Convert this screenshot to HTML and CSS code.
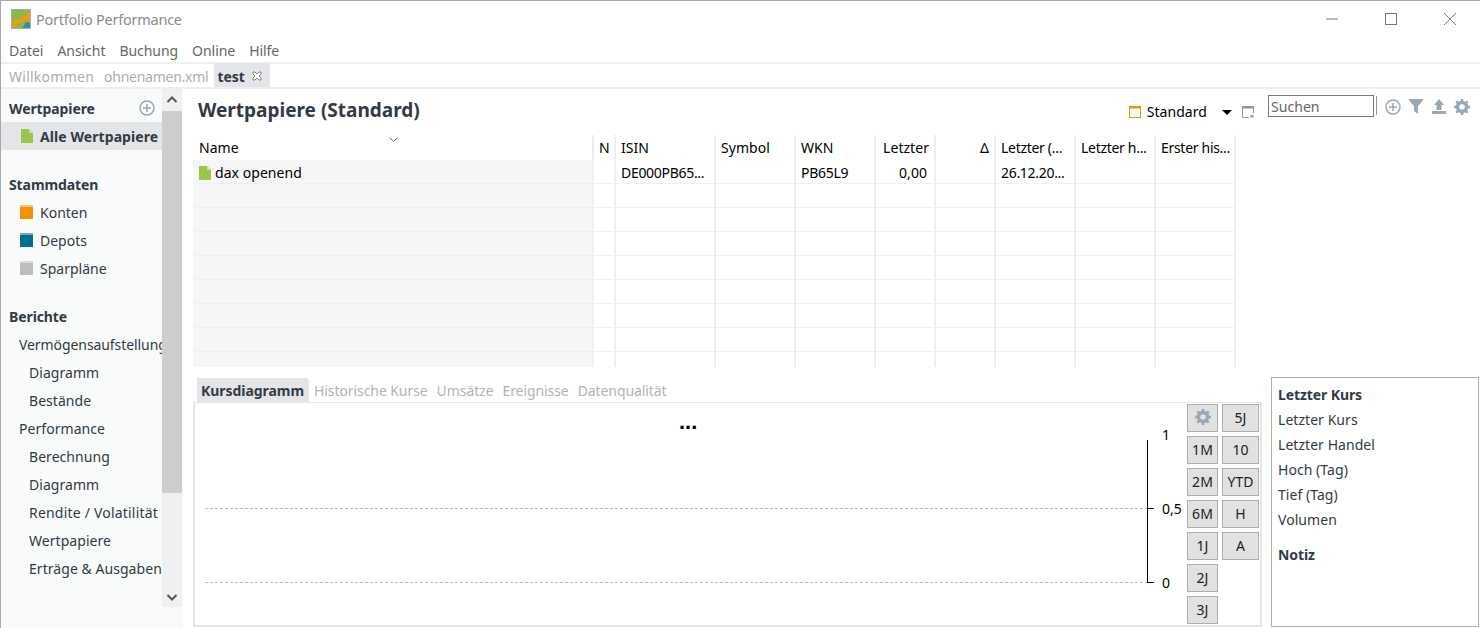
FILE: index.html
```html
<!DOCTYPE html>
<html lang="de">
<head>
<meta charset="utf-8">
<title>Portfolio Performance</title>
<link rel="stylesheet" href="styles.css">
</head>
<body>
<div class="window">
  <header class="titlebar">
    <div class="app-title">
      <svg class="logo" width="20" height="20" viewBox="0 0 20 20"><rect x="0.5" y="0.5" width="19" height="19" fill="#8fb84a" stroke="#a9b0a8"/><path d="M1 18V14L6 10L9 11L13 6L15 7L19 2V12L15 11L11 14L7 14L4 18Z" fill="#f39a12"/><path d="M12 18L14 14L17 13L19 14V19H12Z" fill="#3c8aa8"/></svg>
      <span>Portfolio Performance</span>
    </div>
    <div class="win-controls">
      <svg width="14" height="14" viewBox="0 0 14 14"><path d="M1 7H13" stroke="#777" fill="none"/></svg>
      <svg width="14" height="14" viewBox="0 0 14 14"><rect x="1.5" y="1.5" width="11" height="11" stroke="#777" fill="none"/></svg>
      <svg width="14" height="14" viewBox="0 0 14 14"><path d="M1 1L13 13M13 1L1 13" stroke="#777" fill="none"/></svg>
    </div>
  </header>
  <nav class="menubar"><span>Datei</span><span>Ansicht</span><span>Buchung</span><span>Online</span><span>Hilfe</span></nav>
  <div class="tabbar">
    <span class="doc-tab welcome">Willkommen</span>
    <span class="doc-tab file">ohnenamen.xml</span>
    <span class="doc-tab active">test
      <svg width="10" height="10" viewBox="0 0 10 10"><path d="M1 1H3L5 3L7 1H9V3L7 5L9 7V9H7L5 7L3 9H1V7L3 5L1 3Z" fill="#fff" stroke="#777" stroke-width="0.9"/></svg>
    </span>
  </div>
  <div class="body">
    <aside class="sidebar">
      <div class="side-list">
        <div class="side-head first"><span>Wertpapiere</span>
          <svg class="add" width="16" height="16" viewBox="0 0 16 16"><circle cx="8" cy="8" r="7" fill="none" stroke="#9aa7b4" stroke-width="1.5"/><path d="M8 4V12M4 8H12" stroke="#9aa7b4" stroke-width="1.6"/></svg>
        </div>
        <div class="side-item selected">
          <svg class="doc" width="12" height="14" viewBox="0 0 12 14"><path d="M0 0H8L12 4V14H0Z" fill="#9dc44d"/><path d="M8 0L12 4H8Z" fill="#cfe2a3"/></svg>
          <span>Alle Wertpapiere</span>
        </div>
        <div class="side-head gap">Stammdaten</div>
        <div class="side-item"><i class="swatch orange"></i><span class="normal">Konten</span></div>
        <div class="side-item"><i class="swatch teal"></i><span class="normal">Depots</span></div>
        <div class="side-item"><i class="swatch gray"></i><span class="normal">Sparpläne</span></div>
        <div class="side-head gap">Berichte</div>
        <div class="side-sub l1 tight">Vermögensaufstellung</div>
        <div class="side-sub l2">Diagramm</div>
        <div class="side-sub l2">Bestände</div>
        <div class="side-sub l1">Performance</div>
        <div class="side-sub l2">Berechnung</div>
        <div class="side-sub l2">Diagramm</div>
        <div class="side-sub l2 wide-text">Rendite / Volatilität</div>
        <div class="side-sub l2">Wertpapiere</div>
        <div class="side-sub l2">Erträge &amp; Ausgaben</div>
      </div>
      <div class="scrollbar">
        <svg width="20" height="22" viewBox="0 0 20 22"><path d="M5.5 13L10 8.5L14.500 13" fill="none" stroke="#555" stroke-width="2"/></svg>
        <div class="thumb"></div>
        <div class="track"></div>
        <svg width="20" height="20" viewBox="0 0 20 20"><path d="M5.500 8L10 12.500L14.500 8" fill="none" stroke="#555" stroke-width="2"/></svg>
      </div>
    </aside>
    <main class="content">
      <div class="head">
        <h1>Wertpapiere (Standard)</h1>
        <div class="tools">
          <svg width="12" height="12" viewBox="0 0 12 12"><rect x="0.500" y="0.500" width="11" height="11" fill="#fff" stroke="#f39200"/><rect width="12" height="2.500" fill="#f39200"/></svg>
          <span class="std">Standard</span>
          <svg class="caret" width="10" height="5" viewBox="0 0 10 5"><path d="M0 0H10L5 5Z" fill="#000"/></svg>
          <svg class="newview" width="12" height="12" viewBox="0 0 12 12"><path d="M0.500 11.500V0.500H11.500V7M0.500 11.500H7" fill="none" stroke="#8c9aa8"/><rect width="12" height="2.500" fill="#8c9aa8"/><rect x="8.500" y="9" width="3" height="2.500" fill="#8c9aa8"/></svg>
          <div class="search">Suchen</div>
          <i class="tool-sep"></i>
          <svg width="16" height="16" viewBox="0 0 16 16"><circle cx="8" cy="8" r="7" fill="none" stroke="#9aa7b4" stroke-width="1.500"/><path d="M8 4V12M4 8H12" stroke="#9aa7b4" stroke-width="1.600"/></svg>
          <svg class="filter" width="14" height="15" viewBox="0 0 14 15"><path d="M0 0H14V1.500L9 7V15L5 12V7L0 1.500Z" fill="#9aa7b4"/></svg>
          <svg width="14" height="15" viewBox="0 0 14 15"><path d="M7 0L12 6H9.500V11H4.500V6H2Z" fill="#9aa7b4"/><path d="M0 12H14V15H0Z" fill="#9aa7b4"/></svg>
          <svg width="16" height="16" viewBox="0 0 16 16"><circle cx="8" cy="8" r="4.500" fill="none" stroke="#9aa7b4" stroke-width="3.400"/><path d="M8 0V3M8 13V16M0 8H3M13 8H16M2.300 2.300L4.500 4.500M11.500 11.500L13.700 13.700M13.700 2.300L11.500 4.500M4.500 11.500L2.300 13.700" stroke="#9aa7b4" stroke-width="2.600"/></svg>
        </div>
      </div>
      <div class="sort-mark"><svg width="9" height="5" viewBox="0 0 9 5"><path d="M0.500 0.500L4.500 4.500L8.500 0.500" fill="none" stroke="#777"/></svg></div>
      <table class="grid">
        <colgroup><col class="c-name"><col class="c-n"><col class="c-isin"><col class="c-80"><col class="c-80"><col class="c-60"><col class="c-60"><col class="c-80"><col class="c-80"><col class="c-80"><col></colgroup>
        <thead>
          <tr><th class="name">Name</th><th>N</th><th>ISIN</th><th>Symbol</th><th>WKN</th><th class="right">Letzter</th><th class="right">Δ</th><th class="cut">Letzter (...</th><th class="cut">Letzter h...</th><th class="cut">Erster his...</th><th class="blank"></th></tr>
        </thead>
        <tbody>
          <tr><td class="name"><svg class="doc" width="12" height="14" viewBox="0 0 12 14"><path d="M0 0H8L12 4V14H0Z" fill="#9dc44d"/><path d="M8 0L12 4H8Z" fill="#cfe2a3"/></svg>dax openend</td><td></td><td class="cut">DE000PB65...</td><td></td><td class="cut">PB65L9</td><td class="right">0,00</td><td></td><td class="cut">26.12.20...</td><td></td><td></td><td class="blank"></td></tr>
          <tr><td class="name"></td><td></td><td></td><td></td><td></td><td></td><td></td><td></td><td></td><td></td><td class="blank"></td></tr>
          <tr><td class="name"></td><td></td><td></td><td></td><td></td><td></td><td></td><td></td><td></td><td></td><td class="blank"></td></tr>
          <tr><td class="name"></td><td></td><td></td><td></td><td></td><td></td><td></td><td></td><td></td><td></td><td class="blank"></td></tr>
          <tr><td class="name"></td><td></td><td></td><td></td><td></td><td></td><td></td><td></td><td></td><td></td><td class="blank"></td></tr>
          <tr><td class="name"></td><td></td><td></td><td></td><td></td><td></td><td></td><td></td><td></td><td></td><td class="blank"></td></tr>
          <tr><td class="name"></td><td></td><td></td><td></td><td></td><td></td><td></td><td></td><td></td><td></td><td class="blank"></td></tr>
          <tr><td class="name"></td><td></td><td></td><td></td><td></td><td></td><td></td><td></td><td></td><td></td><td class="blank"></td></tr>
          <tr class="partial"><td class="name"></td><td></td><td></td><td></td><td></td><td></td><td></td><td></td><td></td><td></td><td class="blank"></td></tr>
        </tbody>
      </table>
      <div class="lower">
        <section class="detail">
          <div class="detail-tabs"><span class="active">Kursdiagramm</span><span>Historische Kurse</span><span>Umsätze</span><span>Ereignisse</span><span>Datenqualität</span></div>
          <div class="panel">
            <div class="chart">
              <div class="dots">...</div>
              <i class="dash d1"></i><i class="dash d2"></i>
              <i class="axis"></i><i class="tick t2"></i><i class="tick t3"></i>
              <span class="lab l-1">1</span><span class="lab l-5">0,5</span><span class="lab l-0">0</span>
            </div>
            <div class="ranges">
              <button class="range"><svg width="16" height="16" viewBox="0 0 16 16"><circle cx="8" cy="8" r="4.500" fill="none" stroke="#9aa7b4" stroke-width="3.400"/><path d="M8 0V3M8 13V16M0 8H3M13 8H16M2.300 2.300L4.500 4.500M11.500 11.500L13.700 13.700M13.700 2.300L11.500 4.500M4.500 11.500L2.300 13.700" stroke="#9aa7b4" stroke-width="2.600"/></svg></button>
              <button class="range wide">5J</button>
              <button class="range">1M</button><button class="range wide">10</button>
              <button class="range">2M</button><button class="range wide">YTD</button>
              <button class="range">6M</button><button class="range wide">H</button>
              <button class="range">1J</button><button class="range wide">A</button>
              <button class="range">2J</button><span></span>
              <button class="range">3J</button><span></span>
            </div>
          </div>
        </section>
        <section class="info">
          <h2>Letzter Kurs</h2>
          <p>Letzter Kurs</p>
          <p>Letzter Handel</p>
          <p>Hoch (Tag)</p>
          <p>Tief (Tag)</p>
          <p>Volumen</p>
          <h2 class="note">Notiz</h2>
        </section>
      </div>
    </main>
  </div>
</div>
</body>
</html>
```

FILE: styles.css
```css
* { box-sizing: border-box; }
html, body { margin: 0; height: 100%; overflow: hidden; background: #fff; }
body { font-family: "Noto Sans", "Open Sans", sans-serif; font-size: 14px; letter-spacing: 0.05px; color: #000; }
svg { display: block; flex: none; }

.window { height: 628px; border-top: 1px solid #a8a8a8; border-left: 1px solid #a8a8a8; display: flex; flex-direction: column; }

.titlebar { height: 37px; flex: none; display: flex; align-items: center; justify-content: space-between; padding: 0 0 2px 10px; }
.app-title { display: flex; align-items: center; gap: 5px; color: #8c8c8c; font-size: 14.500px; letter-spacing: -0.25px; }
.win-controls { display: flex; gap: 45px; padding-right: 23px; }

.menubar { height: 24px; flex: none; display: flex; gap: 14px; padding-left: 8px; align-items: center; color: #666; letter-spacing: -0.05px; }

.tabbar { height: 27px; flex: none; display: flex; align-items: flex-end; padding-left: 3px; border-top: 2px solid #f0f0f0; border-bottom: 2px solid #eeeeee; }
.doc-tab { height: 24px; display: flex; align-items: center; gap: 7px; padding: 2px 5px 0; color: #a9adb3; }
.doc-tab.welcome { letter-spacing: 0.25px; }
.doc-tab.file { letter-spacing: -0.25px; }
.doc-tab.active { background: #e3e5e9; color: #333a45; font-weight: 700; letter-spacing: -0.1px; border-radius: 0 4px 0 0; margin-left: 1px; padding: 2px 8px 0 3px; }

.body { flex: 1; display: flex; min-height: 0; }

.sidebar { width: 182px; flex: none; display: flex; background: #f8fbf9; }
.side-list { width: 161px; flex: none; overflow: hidden; white-space: nowrap; color: #333a45; }
.side-head { height: 28px; display: flex; align-items: center; justify-content: space-between; padding: 0 7px 0 8px; font-weight: 700; letter-spacing: -0.1px; }
.side-head.first { margin-top: 5px; }
.side-head.gap { margin-top: 20px; }
.side-item { height: 28px; display: flex; align-items: center; gap: 7px; padding-left: 19px; font-weight: 700; letter-spacing: 0.08px; }
.side-item .doc { margin-left: 1px; }
.side-item.selected { background: #e3e5e9; }
.side-item .normal { font-weight: 400; letter-spacing: 0; }
.swatch { width: 13px; height: 14px; display: block; flex: none; border-top: 2px solid rgba(255,255,255,.45); }
.swatch.orange { background: #f39200; }
.swatch.teal { background: #006f8f; }
.swatch.gray { background: #bdbdbd; }
.side-sub { height: 28px; display: flex; align-items: center; }
.side-sub.l1 { padding-left: 18px; }
.side-sub.l2 { padding-left: 28px; }
.side-sub.tight { letter-spacing: -0.08px; }
.side-sub.wide-text { letter-spacing: 0.2px; }

.scrollbar { width: 20px; flex: none; background: #f0f0f0; display: flex; flex-direction: column; height: 518px; }
.thumb { height: 382px; flex: none; background: #cdcdcd; }
.track { flex: 1; }

.content { flex: 1; min-width: 0; padding-left: 10px; display: flex; flex-direction: column; }

.head { height: 46px; flex: none; display: flex; justify-content: space-between; padding: 0 0 0 5px; }
h1 { margin: 8px 0 0; font-size: 19px; font-weight: 700; color: #333a45; line-height: 26px; letter-spacing: 0; }
.tools { display: flex; align-items: flex-start; padding: 10px 10px 0 0; gap: 8px; }
.tools > svg:first-child { margin-top: 7px; }
.std { margin-left: -2px; line-height: 26px; }
.tools .caret { margin: 11px 2px 0 7px; }
.tools .newview { margin: 7px 10px 0 0; }
.tools .filter { margin-right: 1px; }
.search { width: 106px; height: 22px; margin-top: -4px; margin-left: -4px; border: 1px solid #7a7a7a; color: #666; line-height: 21px; padding-left: 2px; }
.tool-sep { width: 1px; height: 19px; margin: -3px 0 0 -6px; background: #999; display: block; }

.sort-mark { height: 0; padding-left: 196px; position: relative; top: 2px; }

.grid { table-layout: fixed; width: 100%; border-collapse: separate; border-spacing: 0; flex: none; height: 232px; }
.c-name { width: 401px; } .c-n { width: 22px; } .c-isin { width: 100px; } .c-80 { width: 80px; } .c-60 { width: 60px; }
.grid th { height: 25px; font-weight: 400; text-align: left; padding: 0 5px 0 5px; border-right: 2px solid #eeeeee; white-space: nowrap; overflow: hidden; }
.grid th.name { padding-left: 6px; }
.grid th.blank, .grid td.blank { border: 0; background: none; }
.grid th.right, .grid td.right { text-align: right; }
.grid td { height: 24px; padding: 1px 5px 0; border-right: 2px solid #e9f0f8; border-bottom: 1px solid #eef0f4; white-space: nowrap; overflow: hidden; }
.grid td.blank { border: 0; }
.grid td.right { padding-right: 7px; }
.grid td.name { background: #f6f6f6; border-right: 2px solid #eef2f8; padding-left: 6px; }
.grid td.name .doc { display: inline-block; vertical-align: -2px; margin-right: 4px; }
.grid .partial td { height: 15px; border-bottom: 0; }
.grid .cut { letter-spacing: -0.3px; }

.lower { flex: 1; display: flex; min-height: 0; margin-top: 11px; gap: 9px; padding-bottom: 1px; }
.detail { width: 1069px; flex: none; display: flex; flex-direction: column; }
.detail-tabs { height: 24px; flex: none; display: flex; align-items: flex-start; color: #b0b3b8; padding-left: 4px; letter-spacing: -0.08px; }
.detail-tabs span { padding: 0 5px 0 4px; height: 24px; line-height: 25px; }
.detail-tabs span.active { background: #e3e5e9; color: #333a45; font-weight: 700; letter-spacing: -0.05px; border-radius: 0 4px 0 0; margin-right: 1px; }
.panel { flex: 1; display: flex; border: 2px solid #e6e6ea; border-top-width: 1px; position: relative; min-height: 0; }
.chart { flex: 1; position: relative; }
.dots { position: absolute; left: 484px; top: 7px; font-family: "Liberation Sans", sans-serif; font-weight: 700; font-size: 22px; line-height: 24px; letter-spacing: 0; }
.dash { position: absolute; left: 10px; width: 943px; border-top: 1px dashed #bbb; display: block; }
.dash.d1 { top: 105px; }
.dash.d2 { top: 179px; }
.axis { position: absolute; left: 952px; top: 37px; height: 143px; width: 1px; background: #000; display: block; }
.tick { position: absolute; left: 952px; width: 7px; height: 1px; background: #000; display: block; }
.tick.t2 { top: 105px; } .tick.t3 { top: 179px; }
.lab { position: absolute; left: 967px; line-height: 18px; }
.lab.l-1 { top: 23px; } .lab.l-5 { top: 97px; } .lab.l-0 { top: 171px; }
.ranges { width: 72px; flex: none; display: grid; grid-template-columns: 31px 37px; grid-auto-rows: 28px; gap: 4px; padding-top: 1px; margin-right: 1px; align-content: start; }
.range { font: inherit; letter-spacing: 0.05px; color: #222; background: #e1e1e1; border: 1px solid #adadad; padding: 0 0 2px; display: flex; align-items: center; justify-content: center; }

.info { width: 208px; flex: none; border: 1px solid #adadad; margin-top: -1px; height: 250px; padding: 4px 6px; color: #333a45; }
.info h2 { margin: 0; font-size: 14px; font-weight: 700; line-height: 25px; letter-spacing: -0.1px; }
.info p { margin: 0; line-height: 25px; }
.info .note { margin-top: 10px; }
```
